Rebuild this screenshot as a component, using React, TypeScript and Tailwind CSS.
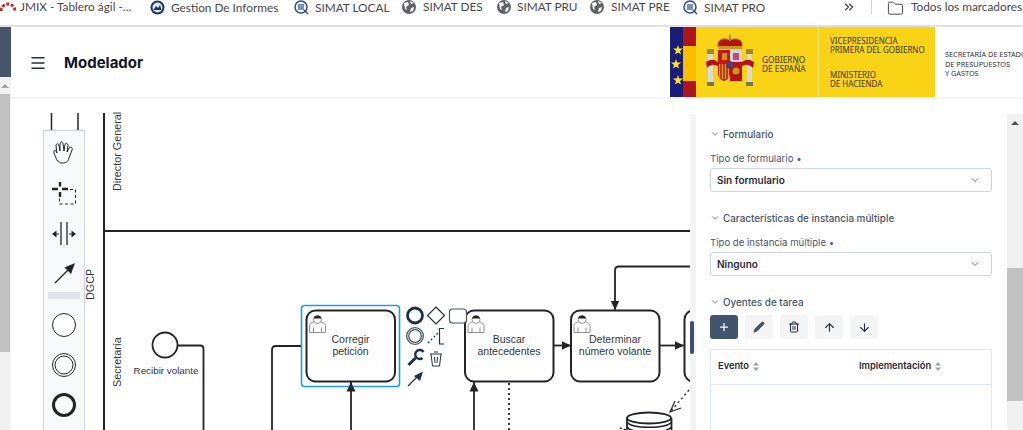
import { ArrowDown, ArrowUp, ChevronDown, ChevronsRight, Folder, Menu, Pencil, Plus, Trash2 } from 'lucide-react';

const bookmarks = [
  { label: 'JMIX - Tablero ágil -...', icon: 'jmix', width: 'w-[150px]', gap: 'gap-[4px]' },
  { label: 'Gestion De Informes', icon: 'report', width: 'w-[144px]', gap: 'gap-[6px]' },
  { label: 'SIMAT LOCAL', icon: 'simat', width: 'w-[108px]', gap: 'gap-[6px]' },
  { label: 'SIMAT DES', icon: 'globe', width: 'w-[95px]', gap: 'gap-[7px]' },
  { label: 'SIMAT PRU', icon: 'globe', width: 'w-[93px]', gap: 'gap-[6px]' },
  { label: 'SIMAT PRE', icon: 'globe', width: 'w-[93px]', gap: 'gap-[7px]' },
  { label: 'SIMAT PRO', icon: 'simat', width: 'w-[110px]', gap: 'gap-[6px]' },
];

function BookmarkIcon({ kind }: { kind: string }) {
  if (kind === 'jmix') {
    return (
      <svg width="16" height="14" viewBox="0 0 16 14" className="shrink-0">
        <path d="M1 11 A7 7 0 0 1 15 11" fill="none" stroke="#d3232a" strokeWidth="3" strokeDasharray="3 1.6" />
      </svg>
    );
  }
  if (kind === 'globe') {
    return (
      <svg width="14" height="14" viewBox="0 0 14 14" className="shrink-0">
        <circle cx="7" cy="7" r="7" fill="#5f6368" />
        <path d="M2 3 L6 2 L7 5 L4 7 L5 10 L3 9 Z M9 8 L12 7 L11 11 L8 12 Z M8 1 L12 3 L9 4 Z" fill="#fff" />
      </svg>
    );
  }
  if (kind === 'report') {
    return (
      <svg width="15" height="15" viewBox="0 0 15 15" className="shrink-0">
        <circle cx="7.5" cy="7.5" r="7" fill="#1c3560" />
        <circle cx="7.5" cy="7.5" r="5" fill="#dfe6f0" />
        <path d="M3.5 10 L6 6 L8 8 L10 5 L11.5 10 Z" fill="#1c3560" />
      </svg>
    );
  }
  return (
    <svg width="15" height="15" viewBox="0 0 15 15" className="shrink-0">
      <circle cx="7" cy="7" r="6" fill="#fff" stroke="#2a4a94" strokeWidth="1.5" />
      <rect x="4" y="4" width="6" height="6" fill="#7b8fc0" />
      <path d="M10 10 L14 14" stroke="#2a4a94" strokeWidth="1.5" />
    </svg>
  );
}

function BookmarkBar() {
  return (
    <div className="flex h-[27px] shrink-0 items-start border-b-2 border-[#dfe1e5] bg-white font-['Lato',sans-serif] text-[11.8px] leading-[14px] text-[#474747]">
      {bookmarks.map((b) => (
        <div key={b.label} className={`flex shrink-0 items-center ${b.gap} ${b.width}`}>
          <BookmarkIcon kind={b.icon} />
          <span className="whitespace-nowrap">{b.label}</span>
        </div>
      ))}
      <ChevronsRight size={14} className="ml-[49px] shrink-0 text-[#333]" />
      <div className="ml-[15px] h-[14px] w-px shrink-0 bg-[#c5d4ea]" />
      <Folder size={17} strokeWidth={1.4} className="ml-[15px] shrink-0 text-[#444]" />
      <span className="ml-[7px] whitespace-nowrap">Todos los marcadores</span>
    </div>
  );
}

function CoatOfArms() {
  return (
    <svg width="48" height="54" viewBox="0 0 48 54" className="shrink-0">
      <path d="M12 12 C10 4 18 2 24 5 C30 2 38 4 36 12 Z" fill="#b5121b" stroke="#c79a1a" strokeWidth="1" />
      <rect x="23" y="0" width="2" height="6" fill="#a5851d" />
      <rect x="12" y="11" width="24" height="3" fill="#c79a1a" />
      <rect x="2" y="17" width="5" height="31" fill="#d9d9d9" />
      <rect x="41" y="17" width="5" height="31" fill="#d9d9d9" />
      <rect x="1" y="14" width="7" height="5" fill="#a5851d" />
      <rect x="40" y="14" width="7" height="5" fill="#a5851d" />
      <rect x="1" y="47" width="7" height="4" fill="#6f7a55" />
      <rect x="40" y="47" width="7" height="4" fill="#6f7a55" />
      <path d="M0 27 C6 23 10 25 13 28 L13 32 C8 28 4 30 1 33 Z" fill="#b5121b" />
      <path d="M48 27 C42 23 38 25 35 28 L35 32 C40 28 44 30 47 33 Z" fill="#b5121b" />
      <path d="M12 15 H24 V38 C24 48 12 48 12 38 Z" fill="#c4161c" />
      <path d="M24 15 H36 V38 C36 48 24 48 24 38 Z" fill="#d9d2d0" />
      <rect x="24" y="27" width="12" height="19" fill="#b5121b" />
      <rect x="13" y="29" width="10" height="15" fill="#d7a21b" />
      <path d="M15 29 V44 M18 29 V46 M21 29 V44" stroke="#b5121b" strokeWidth="1.4" />
      <rect x="16" y="18" width="5" height="7" fill="#c9971a" />
      <rect x="27" y="18" width="6" height="7" fill="#b44c8a" />
      <circle cx="30" cy="36" r="3.5" fill="#c9971a" />
      <circle cx="24" cy="30" r="3.4" fill="#274f9c" stroke="#b5121b" />
    </svg>
  );
}

function Star({ className }: { className: string }) {
  return (
    <svg width="10" height="10" viewBox="0 0 10 10" className={className}>
      <path d="M5 0 L6.2 3.5 L10 3.6 L7 5.9 L8.1 9.6 L5 7.4 L1.9 9.6 L3 5.9 L0 3.6 L3.8 3.5 Z" fill="#fdea14" />
    </svg>
  );
}

function GovLogo() {
  return (
    <div className="flex h-full shrink-0">
      <div className="flex w-[13px] flex-col items-start bg-[#1a1d78] pt-[18px]">
        <Star className="ml-[3px]" />
        <Star className="ml-[1px] mt-[4px]" />
        <Star className="ml-[3px] mt-[6px]" />
      </div>
      <div className="flex w-[13px] flex-col">
        <div className="h-[19px] bg-[#ad1519]" />
        <div className="flex-1 bg-[#fabd00]" />
        <div className="h-[16px] bg-[#ad1519]" />
      </div>
      <div className="flex w-[123px] items-center border-r border-[#f4e27a] bg-[#f8d316] pl-[10px]">
        <CoatOfArms />
        <div className="ml-[8px] pt-[3px] text-[8.3px] leading-[9px] text-[#3a3320]">
          GOBIERNO
          <br />
          DE ESPAÑA
        </div>
      </div>
      <div className="flex w-[116px] flex-col justify-between bg-[#f8d316] pb-[9px] pl-[11px] pt-[9px] text-[8px] leading-[9px] text-[#3a3320]">
        <div className="whitespace-nowrap">
          VICEPRESIDENCIA
          <br />
          PRIMERA DEL GOBIERNO
        </div>
        <div className="whitespace-nowrap">
          MINISTERIO
          <br />
          DE HACIENDA
        </div>
      </div>
      <div className="flex w-[88px] flex-col justify-center whitespace-nowrap pl-[10px] pt-[5px] text-[7.3px] leading-[9.5px] text-[#333]">
        <span>SECRETARÍA DE ESTADO</span>
        <span>DE PRESUPUESTOS</span>
        <span>Y GASTOS</span>
      </div>
    </div>
  );
}

function Header() {
  return (
    <div className="flex h-[72px] shrink-0 border-b-2 border-[#f3f4f6] bg-white">
      <div className="flex flex-1 items-center pl-[18px] pt-[2px]">
        <Menu size={18} strokeWidth={2} className="text-[#1e2f4d]" />
        <h1 className="ml-[17px] mt-[1px] font-['Inter',sans-serif] text-[15px] font-bold text-[#0f172a]">Modelador</h1>
      </div>
      <GovLogo />
    </div>
  );
}

function UserMark({ x, y }: { x: number; y: number }) {
  return (
    <g transform={`translate(${x} ${y})`} fill="none" stroke="#777" strokeWidth="0.8">
      <path d="M0 18 V11 C0 9 3 8 5 7 M16 18 V11 C16 9 13 8 11 7 M0 18 H16 M4 18 V13 M12 18 V13" />
      <circle cx="8" cy="5" r="4" fill="#fff" />
      <path d="M4 4 C5 0 11 0 12 4 Z" fill="#222" stroke="none" />
    </g>
  );
}

function Task({ x, y, lines }: { x: number; y: number; lines: string[] }) {
  const cx = x + 44;
  return (
    <g>
      <rect x={x} y={y} width="88.5" height="71" rx="9" fill="#fff" stroke="#22242a" strokeWidth="2" />
      <UserMark x={x + 3} y={y + 4} />
      {lines.map((line, i) => (
        <text key={line} x={cx} y={y + 32 + i * 12} textAnchor="middle" fontSize="10.5" fill="#33363c">
          {line}
        </text>
      ))}
    </g>
  );
}

function Diagram() {
  const ink = '#22242a';
  const pad = '#1e2f4d';
  return (
    <svg width="679" height="331" viewBox="0 0 679 331" className="block h-[331px] w-[679px]" style={{ fontFamily: '"Liberation Sans", Arial, sans-serif' }}>
      <defs>
        <marker id="arrow" markerWidth="10" markerHeight="10" refX="9.5" refY="5" orient="auto" markerUnits="userSpaceOnUse">
          <path d="M0 0.5 L9.5 5 L0 9.5 Z" fill={ink} />
        </marker>
      </defs>
      <g transform="translate(-11 -99)">
        {/* pools and lanes */}
        <path d="M51.5 113 V130 M78 113 V130" stroke={ink} strokeWidth="1.5" fill="none" />
        <path d="M104 113 V430" stroke={ink} strokeWidth="2" fill="none" />
        <path d="M104 231 H690" stroke={ink} strokeWidth="2" fill="none" />
        <text transform="translate(121 191) rotate(-90)" fontSize="10.8" fill="#33363c">Director General</text>
        <text transform="translate(94 300) rotate(-90)" fontSize="10.8" fill="#33363c">DGCP</text>
        <text transform="translate(121 387) rotate(-90)" fontSize="10.8" fill="#33363c">Secretaría</text>

        {/* palette */}
        <rect x="43.5" y="130.5" width="41" height="310" fill="#f8f9fa" stroke="#cbd5e1" />
        <path d="M54 153 C53 149 56 150 57 153 L56 146 C56 143 59 143 59 146 L60 151 L60 144 C60 141 63 141 63 144 L64 151 L65 145 C65 142 68 143 68 146 L67 152 L69 148 C71 146 73 148 72 150 L69 158 C68 162 66 163 62 163 C58 163 57 161 54 153 Z" fill="none" stroke={ink} strokeWidth="1" />
        <path d="M52 189 H58 M62 189 H68 M60 182 V186.5 M60 192 V197" stroke={ink} strokeWidth="2.4" fill="none" />
        <path d="M70 189.5 H75.5 V204 H59.5 V198" stroke={ink} strokeWidth="1" strokeDasharray="3 2.5" fill="none" />
        <path d="M61 222 V245 M67 222 V245" stroke="#4b4f55" strokeWidth="1.6" />
        <path d="M55 234 H59 M69 234 H73" stroke={ink} strokeWidth="1.2" />
        <path d="M52 234 L56.5 230.5 V237.5 Z M76 234 L71.5 230.5 V237.5 Z" fill={ink} />
        <path d="M55 283 L69 269" stroke={ink} strokeWidth="1.3" />
        <path d="M75 263 L64.5 267.5 L71 274 Z" fill={ink} />
        <rect x="48" y="292" width="32" height="7" fill="#dfe3e8" />
        <circle cx="64" cy="325" r="11.5" fill="#fff" stroke={ink} strokeWidth="1" />
        <circle cx="64" cy="365" r="11.5" fill="#fff" stroke={ink} strokeWidth="1" />
        <circle cx="64" cy="365" r="9" fill="none" stroke={ink} strokeWidth="1" />
        <circle cx="64" cy="405" r="10.5" fill="#fff" stroke={ink} strokeWidth="3" />

        {/* start event */}
        <circle cx="165" cy="345" r="12.5" fill="#fff" stroke={ink} strokeWidth="1.8" />
        <text x="166" y="374" textAnchor="middle" fontSize="9.8" fill="#33363c">Recibir volante</text>
        <path d="M178 345.5 H200 Q203.5 345.5 203.5 349 V430" stroke={ink} strokeWidth="1.8" fill="none" />

        {/* flows */}
        <path d="M306 346 H276 Q272 346 272 350 V430" stroke={ink} strokeWidth="1.8" fill="none" />
        <path d="M553 345.5 H571" stroke={ink} strokeWidth="1.8" fill="none" markerEnd="url(#arrow)" />
        <path d="M659 345.5 H684" stroke={ink} strokeWidth="1.8" fill="none" markerEnd="url(#arrow)" />
        <path d="M690 266.5 H619 Q615 266.5 615 270.5 V310" stroke={ink} strokeWidth="1.8" fill="none" markerEnd="url(#arrow)" />
        <path d="M509 383 V430" stroke={ink} strokeWidth="1.8" strokeDasharray="2 3" fill="none" />
        <path d="M689 390 L671 411" stroke={ink} strokeWidth="1.4" strokeDasharray="2 3" fill="none" />
        <path d="M675 401 L670 412 L681 408" stroke={ink} strokeWidth="1.2" fill="none" />
        <path d="M620 428 L626 430" stroke={ink} strokeWidth="1.4" strokeDasharray="2 2" fill="none" />

        {/* selected task */}
        <rect x="301.5" y="305.5" width="98" height="81" rx="3" fill="#fff" stroke="#1a9cf0" strokeWidth="1.6" />
        <Task x={306.5} y={310.5} lines={['Corregir', 'petición']} />
        <Task x={465} y={310.5} lines={['Buscar', 'antecedentes']} />
        <Task x={571} y={310.5} lines={['Determinar', 'número volante']} />
        <rect x="684.5" y="310.5" width="30" height="71" rx="9" fill="#fff" stroke={ink} strokeWidth="2" />
        <path d="M351 430 V382" stroke={ink} strokeWidth="1.8" fill="none" markerEnd="url(#arrow)" />
        <path d="M474 430 V382" stroke={ink} strokeWidth="1.8" fill="none" markerEnd="url(#arrow)" />

        {/* context pad */}
        <circle cx="415" cy="315.5" r="7.5" fill="none" stroke={pad} strokeWidth="2.8" />
        <path d="M436 307 L444.5 315.5 L436 324 L427.5 315.5 Z" fill="#fff" stroke={pad} strokeWidth="1.2" />
        <rect x="449.5" y="309" width="17" height="14" rx="3" fill="#fff" stroke="#475569" strokeWidth="1.2" />
        <circle cx="415" cy="336" r="8.3" fill="none" stroke="#475569" strokeWidth="1.3" />
        <circle cx="415" cy="336" r="6.3" fill="none" stroke="#475569" strokeWidth="1.3" />
        <path d="M428 343 L438 333" stroke={pad} strokeWidth="1.2" strokeDasharray="2 2" />
        <path d="M444 328.5 H439.5 V344 H444" stroke={pad} strokeWidth="1.2" fill="none" />
        <path d="M408.5 365 L415.5 358" stroke={pad} strokeWidth="3" />
        <path d="M423.5 352 A4.5 4.5 0 1 0 422.5 358" stroke={pad} strokeWidth="2.4" fill="none" />
        <path d="M430 354 H442 M431 354 L432.5 366 H439.5 L441 354 M434 352 H438 M434.5 357 L435 363 M437.5 357 L437 363" stroke={pad} strokeWidth="1" fill="none" />
        <path d="M408 386 L419 375" stroke={pad} strokeWidth="1.2" />
        <path d="M423 371.5 L414 376 L420 381 Z" fill={pad} />

        {/* data store */}
        <path d="M627 418 V440 H671.5 V418" fill="#fff" stroke={ink} strokeWidth="1.8" />
        <ellipse cx="649" cy="418" rx="22" ry="5.5" fill="#fff" stroke={ink} strokeWidth="1.8" />
        <path d="M627 422 C632 429 666 429 671.5 422 M627 427 C632 434 666 434 671.5 427" fill="none" stroke={ink} strokeWidth="1.5" />
      </g>
    </svg>
  );
}

function Section({ title }: { title: string }) {
  return (
    <div className="flex h-[14px] items-center gap-[3px] text-[9.9px] font-medium text-[#475569]">
      <ChevronDown size={10} className="text-[#64748b]" />
      <span>{title}</span>
    </div>
  );
}

function SelectField({ label, value }: { label: string; value: string }) {
  return (
    <div>
      <div className="mb-[2px] text-[9.6px] leading-[14px] text-[#475569]">
        {label} <span className="text-[#2563eb]">•</span>
      </div>
      <div className="flex h-[24px] items-center justify-between rounded-[3px] border border-[#cbd5e1] pl-[6px] pr-[10px] text-[10px] font-semibold text-[#1e293b]">
        <span>{value}</span>
        <ChevronDown size={12} className="text-[#64748b]" />
      </div>
    </div>
  );
}

function SortMark() {
  return (
    <svg width="6" height="9" viewBox="0 0 6 9" className="ml-[4px] inline-block">
      <path d="M3 0 L6 3.5 H0 Z M3 9 L6 5.5 H0 Z" fill="#94a3b8" />
    </svg>
  );
}

function PropertiesPanel() {
  const toolButton = 'flex h-[24px] w-[28px] items-center justify-center rounded-[3px]';
  return (
    <div className="flex min-w-0 flex-1 flex-col bg-white pt-[15px] font-['Inter',sans-serif]">
      <div className="flex min-h-0 flex-1">
        <div className="relative w-[6px] shrink-0 bg-[#f3f4f6]">
          <div className="absolute left-0 top-[207px] h-[33px] w-[4px] rounded-full bg-[#3d4f68]" />
        </div>
        <div className="w-[311px] shrink-0 overflow-hidden pl-[14px] pr-[15px] pt-[13px]">
          <Section title="Formulario" />
          <div className="mt-[11px]">
            <SelectField label="Tipo de formulario" value="Sin formulario" />
          </div>
          <div className="mt-[19px]">
            <Section title="Características de instancia múltiple" />
          </div>
          <div className="mt-[11px]">
            <SelectField label="Tipo de instancia múltiple" value="Ninguno" />
          </div>
          <div className="mt-[19px]">
            <Section title="Oyentes de tarea" />
          </div>
          <div className="mt-[6px] flex gap-[7px]">
            <div className={`${toolButton} bg-[#42546e] text-white`}>
              <Plus size={12} strokeWidth={2.5} />
            </div>
            <div className={`${toolButton} bg-[#f3f4f6] text-[#1e293b]`}>
              <Pencil size={12} fill="#475569" className="text-[#475569]" />
            </div>
            <div className={`${toolButton} bg-[#f3f4f6] text-[#1e293b]`}>
              <Trash2 size={12} />
            </div>
            <div className={`${toolButton} bg-[#f3f4f6] text-[#1e293b]`}>
              <ArrowUp size={13} />
            </div>
            <div className={`${toolButton} bg-[#f3f4f6] text-[#1e293b]`}>
              <ArrowDown size={13} />
            </div>
          </div>
          <div className="mt-[10px] h-[200px] border border-[#e2e8f0]">
            <div className="flex h-[35px] items-center border-b border-[#e2e8f0] pb-[2px] pl-[7px] text-[9.3px] font-semibold text-[#1e293b]">
              <div className="w-[141px]">
                Evento
                <SortMark />
              </div>
              <div>
                Implementación
                <SortMark />
              </div>
            </div>
          </div>
        </div>
        <div className="flex w-[16px] shrink-0 flex-col bg-[#f1f1f1]">
          <div className="flex h-[17px] items-center justify-center">
            <div className="h-0 w-0 border-x-[4px] border-b-[4px] border-x-transparent border-b-[#505050]" />
          </div>
          <div className="mt-[137px] h-[133px] bg-[#c1c1c1]" />
        </div>
      </div>
    </div>
  );
}

export default function App() {
  return (
    <div className="flex h-[430px] w-[1023px] flex-col overflow-hidden bg-white font-['Noto_Sans',sans-serif]">
      <BookmarkBar />
      <div className="flex min-h-0 flex-1">
        <div className="flex w-[11px] shrink-0 flex-col">
          <div className="h-[50px] bg-[#475569]" />
          <div className="flex flex-1 flex-col bg-[#f1f1f1] pr-[1px]">
            <div className="flex h-[17px] items-center justify-center">
              <div className="h-0 w-0 border-x-[4px] border-b-[4px] border-x-transparent border-b-[#a3a3a3]" />
            </div>
            <div className="h-[258px] bg-[#c1c1c1]" />
          </div>
        </div>
        <div className="flex min-w-0 flex-1 flex-col">
          <Header />
          <div className="flex min-h-0 flex-1">
            <div className="w-[679px] shrink-0 overflow-hidden">
              <Diagram />
            </div>
            <PropertiesPanel />
          </div>
        </div>
      </div>
    </div>
  );
}
